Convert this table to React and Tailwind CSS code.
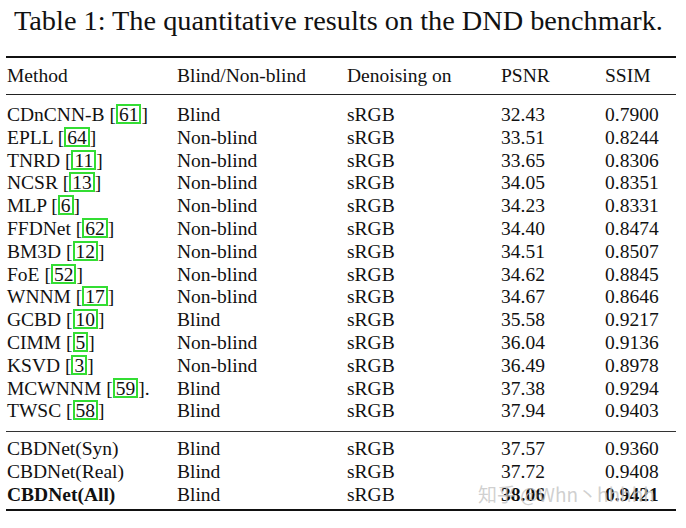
const rows = [
  { name: "CDnCNN-B", ref: "61", type: "Blind", psnr: "32.43", ssim: "0.7900" },
  { name: "EPLL", ref: "64", type: "Non-blind", psnr: "33.51", ssim: "0.8244" },
  { name: "TNRD", ref: "11", type: "Non-blind", psnr: "33.65", ssim: "0.8306" },
  { name: "NCSR", ref: "13", type: "Non-blind", psnr: "34.05", ssim: "0.8351" },
  { name: "MLP", ref: "6", type: "Non-blind", psnr: "34.23", ssim: "0.8331" },
  { name: "FFDNet", ref: "62", type: "Non-blind", psnr: "34.40", ssim: "0.8474" },
  { name: "BM3D", ref: "12", type: "Non-blind", psnr: "34.51", ssim: "0.8507" },
  { name: "FoE", ref: "52", type: "Non-blind", psnr: "34.62", ssim: "0.8845" },
  { name: "WNNM", ref: "17", type: "Non-blind", psnr: "34.67", ssim: "0.8646" },
  { name: "GCBD", ref: "10", type: "Blind", psnr: "35.58", ssim: "0.9217" },
  { name: "CIMM", ref: "5", type: "Non-blind", psnr: "36.04", ssim: "0.9136" },
  { name: "KSVD", ref: "3", type: "Non-blind", psnr: "36.49", ssim: "0.8978" },
  { name: "MCWNNM", ref: "59", type: "Blind", psnr: "37.38", ssim: "0.9294", dot: true },
  { name: "TWSC", ref: "58", type: "Blind", psnr: "37.94", ssim: "0.9403" },
];

const ours = [
  { name: "CBDNet(Syn)", psnr: "37.57", ssim: "0.9360" },
  { name: "CBDNet(Real)", psnr: "37.72", ssim: "0.9408" },
  { name: "CBDNet(All)", psnr: "38.06", ssim: "0.9421", bold: true },
];

const cols = "grid grid-cols-[170px_170px_154px_104px_1fr] pl-px";

function Cite({ n }) {
  return (
    <>
      [
      <span className="inline-block border-2 border-[#33dd33] px-px pt-[2px] leading-[14px]">{n}</span>]
    </>
  );
}

export default function App() {
  return (
    <div className="relative w-[686px] h-[528px] overflow-hidden bg-white text-[#111] font-['Liberation_Serif',serif]">
      <div className="h-[56px] pt-[7px] pl-[14px] text-[28.3px] leading-none whitespace-nowrap">
        Table 1: The quantitative results on the DND benchmark.
      </div>

      <div className="mx-[6px] w-[670px]">
        <div className="h-[2px] bg-[#111]" />
        <div className={`${cols} h-[36px] items-center text-[19.5px] leading-[36px]`}>
          <div>Method</div>
          <div>Blind/Non-blind</div>
          <div>Denoising on</div>
          <div>PSNR</div>
          <div>SSIM</div>
        </div>
        <div className="h-px bg-[#222]" />

        <div className="pt-[9px] pb-[8px] text-[19.5px] leading-[22.8px]">
          {rows.map((r) => (
            <div key={r.name} className={cols}>
              <div className="whitespace-nowrap">
                {r.name} <Cite n={r.ref} />
                {r.dot ? "." : ""}
              </div>
              <div>{r.type}</div>
              <div>sRGB</div>
              <div>{r.psnr}</div>
              <div>{r.ssim}</div>
            </div>
          ))}
        </div>
        <div className="h-px bg-[#333]" />

        <div className="pt-[6px] pb-[2px] text-[19.5px] leading-[22.8px]">
          {ours.map((r) => (
            <div key={r.name} className={cols}>
              <div className={r.bold ? "font-bold" : ""}>{r.name}</div>
              <div>Blind</div>
              <div>sRGB</div>
              <div className={r.bold ? "font-bold" : ""}>{r.psnr}</div>
              <div className={r.bold ? "font-bold" : ""}>{r.ssim}</div>
            </div>
          ))}
        </div>
        <div className="h-[2px] bg-[#111]" />
      </div>

      <div className="absolute left-[478px] top-[484px] text-[19px] leading-none whitespace-nowrap text-[#c4c4c4]/80 font-['Noto_Sans_CJK_SC',sans-serif]">
        知乎 @Whn丶hhhhh
      </div>
    </div>
  );
}
